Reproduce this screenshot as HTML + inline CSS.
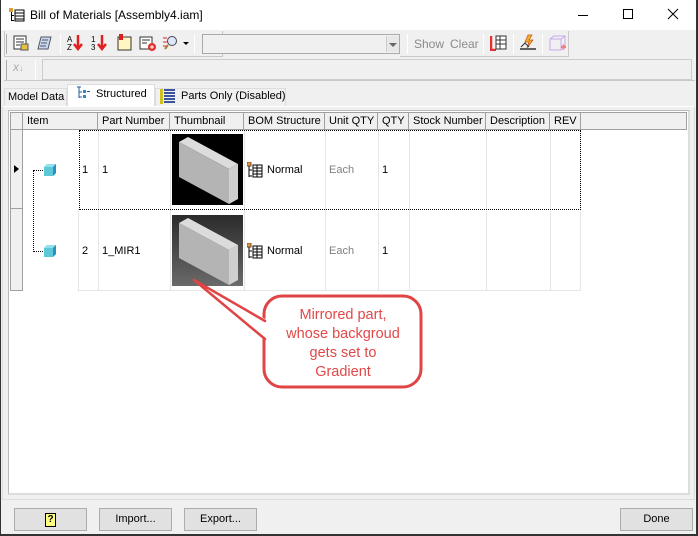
<!DOCTYPE html>
<html><head><meta charset="utf-8"><style>
*{box-sizing:border-box;margin:0;padding:0}
body{width:698px;height:536px;position:relative;overflow:hidden;background:#f0f0f0;font-family:"Liberation Sans",Tahoma,sans-serif;font-size:11px;color:#000}
.a{position:absolute}
.hd{position:absolute;top:112px;height:18px;background:#f0f0f0;border-right:1px solid #a0a0a0;border-bottom:1px solid #a0a0a0;line-height:17px;padding-left:4px;font-size:11px}
.vl{position:absolute;width:1px;background:#e6e6e6}
.hl{position:absolute;height:1px;background:#e6e6e6}
.btn{position:absolute;top:508px;height:23px;background:#e1e1e1;border:1px solid #adadad;text-align:center;line-height:21px;font-size:11px}
.sep{position:absolute;width:1px;height:20px;background:#c0c0c0;border-right:1px solid #fff}
</style></head><body>
<div class="a" style="left:0;top:0;width:698px;height:30px;background:#fff"></div>
<div class="a" style="left:0;top:0;width:1px;height:536px;background:#333"></div>
<div class="a" style="left:696px;top:0;width:2px;height:536px;background:#333"></div>
<svg class="a" style="left:9px;top:8px" width="16" height="14"><rect x="0" y="0" width="4" height="4" fill="#d9a030"/><rect x="2" y="4" width="1" height="9" fill="#000"/><rect x="2" y="7" width="3" height="1"/><rect x="2" y="12" width="3" height="1"/><rect x="6" y="2" width="9" height="11" fill="none" stroke="#000"/><line x1="6" y1="5" x2="15" y2="5" stroke="#000"/><line x1="6" y1="8" x2="15" y2="8" stroke="#000"/><line x1="6" y1="11" x2="15" y2="11" stroke="#000"/></svg>
<div class="a" style="left:30px;top:8px;font-size:12px">Bill of Materials [Assembly4.iam]</div>
<div class="a" style="left:578px;top:15px;width:10px;height:1px;background:#000"></div>
<div class="a" style="left:623px;top:9px;width:10px;height:10px;border:1px solid #000"></div>
<svg class="a" style="left:667px;top:8px" width="12" height="12"><path d="M1 1L11 11M11 1L1 11" stroke="#000" stroke-width="1"/></svg>
<div class="a" style="left:4px;top:31px;width:219px;height:26px;border:1px solid #c8c8c8;border-top:none"></div>
<div class="a" style="left:6px;top:34px;width:1px;height:20px;background:#aaa"></div>
<svg class="a" style="left:13px;top:35px" width="16" height="16"><rect x="1" y="1" width="12" height="13" fill="#fff" stroke="#333"/><path d="M3 4h8M3 7h8M3 10h4" stroke="#333"/><rect x="8" y="9" width="7" height="6" fill="#e8c040" stroke="#555"/></svg>
<svg class="a" style="left:37px;top:35px" width="16" height="16"><path d="M4 2h10l-3 12H1z" fill="#c8d8f0" stroke="#556"/><path d="M5 5h6M4 8h6M3 11h6" stroke="#556"/></svg>
<div class="sep" style="left:60px;top:34px"></div>
<svg class="a" style="left:67px;top:34px" width="18" height="18"><text x="0" y="8" font-size="8" font-family="Liberation Sans">A</text><text x="0" y="16" font-size="8" font-family="Liberation Sans">Z</text><path d="M11 1v12M7 10l4 5 4-5" stroke="#e02020" stroke-width="2.5" fill="none"/></svg>
<svg class="a" style="left:91px;top:34px" width="18" height="18"><text x="0" y="8" font-size="8" font-family="Liberation Sans">1</text><text x="0" y="16" font-size="8" font-family="Liberation Sans">3</text><path d="M11 1v12M7 10l4 5 4-5" stroke="#e02020" stroke-width="2.5" fill="none"/></svg>
<svg class="a" style="left:116px;top:34px" width="18" height="18"><rect x="2" y="3" width="13" height="13" fill="#fff6c0" stroke="#333"/><rect x="3" y="0" width="4" height="6" fill="#e02020"/></svg>
<svg class="a" style="left:139px;top:34px" width="18" height="18"><rect x="1" y="3" width="12" height="12" fill="#fff" stroke="#333"/><path d="M3 6h8M3 9h5" stroke="#333"/><circle cx="13" cy="13" r="4" fill="#e03030"/><path d="M11 13h4M13 11v4" stroke="#fff"/></svg>
<svg class="a" style="left:162px;top:34px" width="18" height="18"><path d="M1 4h4M1 8h4M1 12h4" stroke="#e02020"/><circle cx="10" cy="7" r="4.5" fill="#dde8f4" stroke="#445"/><path d="M6 11l-3 4" stroke="#b08030" stroke-width="2"/></svg>
<div class="a" style="left:183px;top:42px;border-left:3px solid transparent;border-right:3px solid transparent;border-top:3px solid #000"></div>
<div class="sep" style="left:194px;top:34px"></div>
<div class="a" style="left:202px;top:34px;width:198px;height:20px;background:#f0f0f0;border:1px solid #aaa"></div>
<div class="a" style="left:386px;top:36px;width:13px;height:16px;background:#e8e8e8;border-left:1px solid #ccc"></div>
<div class="a" style="left:389px;top:43px;border-left:4px solid transparent;border-right:4px solid transparent;border-top:4px solid #666"></div>
<div class="a" style="left:400px;top:31px;width:169px;height:26px;border:1px solid #c8c8c8;border-top:none;border-left:none"></div>
<div class="sep" style="left:407px;top:34px"></div>
<div class="a" style="left:414px;top:37px;color:#8a8a8a;font-size:12px">Show</div>
<div class="a" style="left:450px;top:37px;color:#8a8a8a;font-size:12px">Clear</div>
<div class="sep" style="left:483px;top:34px"></div>
<svg class="a" style="left:490px;top:35px" width="18" height="16"><path d="M1 1v14h5" stroke="#e03030" stroke-width="2.5" fill="none"/><rect x="6" y="1" width="10" height="13" fill="#fff" stroke="#333"/><path d="M6 5h10M6 9h10M10 1v13" stroke="#333"/></svg>
<div class="sep" style="left:513px;top:34px"></div>
<svg class="a" style="left:519px;top:34px" width="18" height="18"><path d="M9 1l-3 7h4l-2 6 6-8h-4l3-5z" fill="#f0b020" stroke="#c05020" stroke-width=".7"/><path d="M1 15h16" stroke="#333" stroke-width="1.5"/><path d="M2 13l4-4 4 4" stroke="#333" fill="none"/></svg>
<div class="sep" style="left:542px;top:34px"></div>
<svg class="a" style="left:549px;top:35px" width="18" height="16"><rect x="1" y="4" width="11" height="11" fill="none" stroke="#c8a8f0"/><path d="M1 4l4-3h11v11l-4 3M12 4l4-3" stroke="#c8a8f0" fill="none"/><path d="M12 12h5M14.5 9.5v5" stroke="#f08080" stroke-width="2"/></svg>
<div class="a" style="left:4px;top:58px;width:691px;height:23px;border-bottom:1px solid #c8c8c8"></div>
<div class="a" style="left:6px;top:60px;width:1px;height:20px;background:#aaa"></div>
<div class="a" style="left:13px;top:60px;color:#aaa;font-size:12px;font-style:italic">x<span style="font-size:9px">↓</span></div>
<div class="sep" style="left:35px;top:60px"></div>
<div class="a" style="left:42px;top:59px;width:650px;height:21px;border:1px solid #ccc;background:#f0f0f0"></div>
<div class="a" style="left:4px;top:88px;width:63px;height:18px;line-height:16px;padding-left:3px;border:1px solid #ddd;border-bottom:none;font-size:11px">Model Data</div>
<div class="a" style="left:67px;top:84px;width:88px;height:23px;background:#fff;border:1px solid #ddd;border-bottom:none"></div>
<svg class="a" style="left:75px;top:86px" width="16" height="14"><path d="M2 1h4M4 1v11M4 6h3M4 11h3" stroke="#2a5a9a" fill="none"/><rect x="8" y="4" width="3" height="3" fill="#2a8ad0"/><rect x="8" y="9" width="3" height="3" fill="#2a8ad0"/><rect x="12" y="5" width="3" height="1" fill="#2a5a9a"/></svg>
<div class="a" style="left:96px;top:88px;font-size:11px">Structured</div>
<div class="a" style="left:155px;top:88px;width:131px;height:18px;border:1px solid #ddd;border-bottom:none"></div>
<svg class="a" style="left:160px;top:89px" width="16" height="15"><rect x="0" y="0" width="3" height="15" fill="#d0c020"/><path d="M4 1h11M4 4h11M4 7h11M4 10h11M4 13h11" stroke="#002080" stroke-width="1.5"/></svg>
<div class="a" style="left:181px;top:90px;font-size:11px">Parts Only (Disabled)</div>
<div class="a" style="left:2px;top:106px;width:693px;height:394px;border:1px solid #ddd;border-top:1px solid #fff"></div>
<div class="a" style="left:8px;top:110px;width:682px;height:385px;background:#fff;border:1px solid #bbb;border-right:2px solid #ddd;border-bottom:2px solid #ddd"></div>
<div class="hd" style="left:10px;width:13px;padding:0;border-left:1px solid #a0a0a0;border-top:1px solid #a0a0a0"></div>
<div class="hd" style="left:23px;width:75px;border-top:1px solid #a0a0a0">Item</div>
<div class="hd" style="left:98px;width:72px;border-top:1px solid #a0a0a0">Part Number</div>
<div class="hd" style="left:170px;width:74px;border-top:1px solid #a0a0a0">Thumbnail</div>
<div class="hd" style="left:244px;width:81px;border-top:1px solid #a0a0a0">BOM Structure</div>
<div class="hd" style="left:325px;width:53px;border-top:1px solid #a0a0a0">Unit QTY</div>
<div class="hd" style="left:378px;width:31px;border-top:1px solid #a0a0a0">QTY</div>
<div class="hd" style="left:409px;width:77px;border-top:1px solid #a0a0a0">Stock Number</div>
<div class="hd" style="left:486px;width:64px;border-top:1px solid #a0a0a0">Description</div>
<div class="hd" style="left:550px;width:31px;border-top:1px solid #a0a0a0">REV</div>
<div class="hd" style="left:581px;width:106px;border-top:1px solid #a0a0a0"></div>
<div class="a" style="left:10px;top:130px;width:13px;height:79px;background:#f0f0f0;border:1px solid #a0a0a0;border-top:none"></div>
<div class="a" style="left:10px;top:209px;width:13px;height:82px;background:#f0f0f0;border:1px solid #a0a0a0;border-top:none"></div>
<div class="a" style="left:14px;top:165px;border-top:4px solid transparent;border-bottom:4px solid transparent;border-left:5px solid #000"></div>
<div class="vl" style="left:98px;top:130px;height:161px"></div>
<div class="vl" style="left:170px;top:130px;height:161px"></div>
<div class="vl" style="left:244px;top:130px;height:161px"></div>
<div class="vl" style="left:325px;top:130px;height:161px"></div>
<div class="vl" style="left:378px;top:130px;height:161px"></div>
<div class="vl" style="left:409px;top:130px;height:161px"></div>
<div class="vl" style="left:486px;top:130px;height:161px"></div>
<div class="vl" style="left:550px;top:130px;height:161px"></div>
<div class="vl" style="left:580px;top:130px;height:161px"></div>
<div class="vl" style="left:78px;top:209px;height:82px"></div>
<div class="hl" style="left:78px;top:290px;width:503px"></div>
<div class="a" style="left:79px;top:130px;width:502px;height:80px;border:1px dotted #000"></div>
<div class="a" style="left:33px;top:170px;width:10px;height:82px;border-left:1px dotted #000;border-top:1px dotted #000;border-bottom:1px dotted #000"></div>
<svg class="a" style="left:43px;top:163px" width="14" height="14"><path d="M1 4l3-3h9v9l-3 3H1z" fill="#5cc8d8"/><path d="M1 4l3-3h9l-3 3z" fill="#90e0f0"/><path d="M10 4l3-3v9l-3 3z" fill="#2a90c0"/></svg>
<svg class="a" style="left:43px;top:244px" width="14" height="14"><path d="M1 4l3-3h9v9l-3 3H1z" fill="#5cc8d8"/><path d="M1 4l3-3h9l-3 3z" fill="#90e0f0"/><path d="M10 4l3-3v9l-3 3z" fill="#2a90c0"/></svg>
<div class="a" style="left:82px;top:164px">1</div>
<div class="a" style="left:102px;top:164px">1</div>
<div class="a" style="left:82px;top:245px">2</div>
<div class="a" style="left:102px;top:245px">1_MIR1</div>
<svg class="a" style="left:172px;top:134px" width="71" height="71"><rect width="71" height="71" fill="#000"/><path d="M7 8l9-5 50 27l-9 5z" fill="#dcdcdc"/><path d="M7 8l50 27v35L7 43z" fill="#b4b4b4"/><path d="M57 35l9-5v35l-9 5z" fill="#cfcfcf"/></svg>
<svg class="a" style="left:172px;top:215px" width="71" height="71"><defs><linearGradient id="g" x1="0" y1="0" x2="0" y2="1"><stop offset="0" stop-color="#2a2a2a"/><stop offset="1" stop-color="#6a6a6a"/></linearGradient></defs><rect width="71" height="71" fill="url(#g)"/><path d="M7 8l9-5 50 27l-9 5z" fill="#dcdcdc"/><path d="M7 8l50 27v35L7 43z" fill="#b4b4b4"/><path d="M57 35l9-5v35l-9 5z" fill="#cfcfcf"/></svg>
<svg class="a" style="left:247px;top:162px" width="17" height="16"><rect x="0" y="0" width="4" height="4" fill="#d9a030" stroke="#844"/><path d="M2 4v11M2 8h3M2 14h3" stroke="#000"/><rect x="6" y="3" width="9" height="12" fill="none" stroke="#000"/><path d="M6 6h9M6 9h9M6 12h9M10 3v12" stroke="#000"/></svg>
<div class="a" style="left:267px;top:164px">Normal</div>
<svg class="a" style="left:247px;top:243px" width="17" height="16"><rect x="0" y="0" width="4" height="4" fill="#d9a030" stroke="#844"/><path d="M2 4v11M2 8h3M2 14h3" stroke="#000"/><rect x="6" y="3" width="9" height="12" fill="none" stroke="#000"/><path d="M6 6h9M6 9h9M6 12h9M10 3v12" stroke="#000"/></svg>
<div class="a" style="left:267px;top:245px">Normal</div>
<div class="a" style="left:329px;top:164px;color:#808080">Each</div>
<div class="a" style="left:329px;top:245px;color:#808080">Each</div>
<div class="a" style="left:382px;top:164px">1</div>
<div class="a" style="left:382px;top:245px">1</div>
<!-- callout -->
<svg class="a" style="left:0;top:0" width="698" height="536">
<rect x="264" y="296" width="157" height="91" rx="18" fill="#fff" stroke="#e04444" stroke-width="3"/>
<polygon points="194,280 267,320 267,340" fill="#fff"/>
<path d="M194,280 L265,321 M194,280 L265,339" stroke="#e04444" stroke-width="2.5" fill="none" stroke-linecap="round"/>
</svg>
<div class="a" style="left:268px;top:306px;width:150px;text-align:center;color:#e04848;font-size:14.5px;line-height:19px">Mirrored part,<br>whose backgroud<br>gets set to<br>Gradient</div>
<div class="btn" style="left:14px;width:73px"><span style="display:inline-block;width:11px;height:14px;border:1px solid #000;background:#ffff80;line-height:12px;font-weight:bold;font-size:10px;margin-top:3px">?</span></div>
<div class="btn" style="left:99px;width:73px">Import...</div>
<div class="btn" style="left:184px;width:73px">Export...</div>
<div class="btn" style="left:620px;width:73px">Done</div>
<div class="a" style="left:0;top:534px;width:698px;height:2px;background:#333"></div>
</body></html>
